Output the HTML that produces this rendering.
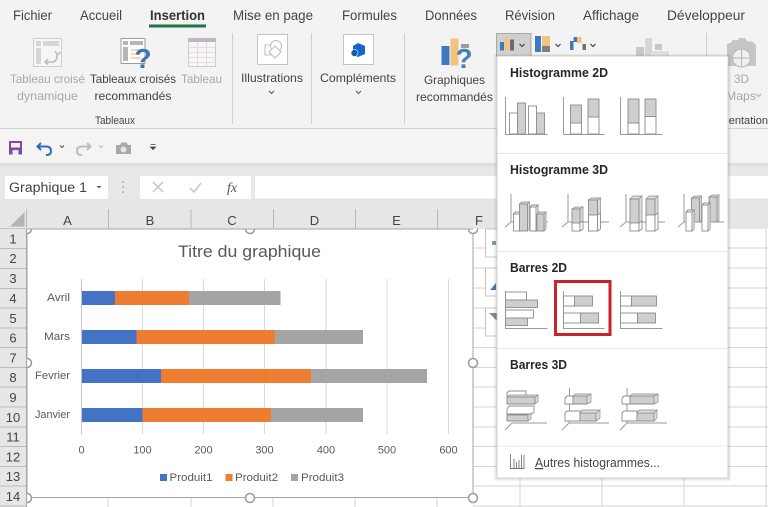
<!DOCTYPE html>
<html><head><meta charset="utf-8"><title>Excel</title>
<style>
html,body{margin:0;padding:0;background:#fff;width:768px;height:507px;overflow:hidden}
svg{display:block;filter:blur(.3px)}
text{font-family:"Liberation Sans",sans-serif}
.tab{font-size:13.5px;fill:#444}
.rb{font-size:12px;fill:#444;text-anchor:middle}
.dis{font-size:12px;fill:#a8a8a8;text-anchor:middle}
.hd{font-size:13px;fill:#444;text-anchor:middle}
.ax{font-size:11px;fill:#595959}
.sec{font-size:12.5px;font-weight:bold;fill:#262626}
.w{fill:#fff;stroke:#8c8c8c;stroke-width:.9}
.g{fill:#cfcfcf;stroke:#8c8c8c;stroke-width:.9}
.s{fill:#dcdcdc;stroke:#8c8c8c;stroke-width:.7}
.l{fill:none;stroke:#9a9a9a;stroke-width:1}
.h{fill:#fff;stroke:#9a9a9a;stroke-width:1.5}
</style></head><body>
<svg width="768" height="507" viewBox="0 0 768 507" xmlns="http://www.w3.org/2000/svg">
<!-- backgrounds -->
<rect width="768" height="507" fill="#fff"/>
<rect width="768" height="129" fill="#f3f3f3"/>
<rect y="128" width="768" height="1" fill="#d2d2d2"/>
<rect y="129" width="768" height="34" fill="#f4f4f3"/>
<rect y="163" width="768" height="46" fill="#e8e8e8"/>
<rect y="163" width="768" height="3" fill="#dedede"/>
<rect y="198" width="768" height="31" fill="#e6e6e6"/>
<!-- tabs -->
<text x="13" y="20" class="tab" textLength="39" lengthAdjust="spacingAndGlyphs">Fichier</text>
<text x="80" y="20" class="tab" textLength="42" lengthAdjust="spacingAndGlyphs">Accueil</text>
<text x="150" y="20" class="tab" style="font-weight:bold;fill:#333" textLength="55" lengthAdjust="spacingAndGlyphs">Insertion</text>
<text x="233" y="20" class="tab" textLength="80" lengthAdjust="spacingAndGlyphs">Mise en page</text>
<text x="342" y="20" class="tab" textLength="55" lengthAdjust="spacingAndGlyphs">Formules</text>
<text x="425" y="20" class="tab" textLength="52" lengthAdjust="spacingAndGlyphs">Données</text>
<text x="505" y="20" class="tab" textLength="50" lengthAdjust="spacingAndGlyphs">Révision</text>
<text x="583" y="20" class="tab" textLength="56" lengthAdjust="spacingAndGlyphs">Affichage</text>
<text x="667" y="20" class="tab" textLength="78" lengthAdjust="spacingAndGlyphs">Développeur</text>
<rect x="149" y="24.5" width="57" height="3" fill="#217346"/>
<!-- ribbon separators -->
<g fill="#d0d0d0"><rect x="232" y="33" width="1" height="91"/><rect x="311" y="33" width="1" height="91"/><rect x="404" y="33" width="1" height="91"/><rect x="706" y="33" width="1" height="91"/></g>
<!-- pivot icon -->
<rect x="33.5" y="38.5" width="28" height="28" fill="#f6f6f6" stroke="#cfcfcf"/>
<rect x="36" y="41" width="5" height="5" fill="#d6d6d6"/><rect x="43" y="41" width="16" height="5" fill="#d6d6d6"/><rect x="36" y="48" width="5" height="16" fill="#d6d6d6"/>
<path d="M45 62h7q5 0 5-7M55 51l2.500 4 3-3M48 59l-3 3 3 2.500" fill="none" stroke="#bdbdbd" stroke-width="1.600"/>
<!-- recommended pivot -->
<rect x="121" y="38.500" width="24" height="25" fill="#fff" stroke="#9b9b9b"/>
<rect x="123" y="41" width="5" height="4" fill="#b5b5b5"/><rect x="130" y="41" width="13" height="4" fill="#b5b5b5"/><rect x="123" y="47" width="5" height="14" fill="#b5b5b5"/>
<path d="M131 50h8M131 54h8M131 58h10" stroke="#eac49a" stroke-width="1.200"/>
<text x="143" y="68" style="font-size:28px;font-weight:bold;fill:#3f77ad" text-anchor="middle">?</text>
<!-- table icon -->
<rect x="188.500" y="38.500" width="27" height="28" fill="#f8f6f8" stroke="#d2c8d2"/>
<rect x="188" y="38" width="28" height="4" fill="#bdb8bd"/>
<path d="M188 47.500h28M188 52.500h28M188 57.500h28M188 62.500h28M197.500 42v24M206.500 42v24" stroke="#dcd4dc" stroke-width=".8"/>
<!-- ribbon labels -->
<text x="47.500" y="83" class="dis" textLength="75" lengthAdjust="spacingAndGlyphs">Tableau croisé</text>
<text x="47.500" y="100" class="dis" textLength="61" lengthAdjust="spacingAndGlyphs">dynamique</text>
<text x="133" y="83" class="rb" textLength="86" lengthAdjust="spacingAndGlyphs">Tableaux croisés</text>
<text x="133" y="100" class="rb" textLength="77" lengthAdjust="spacingAndGlyphs">recommandés</text>
<text x="201.500" y="83" class="dis" textLength="41" lengthAdjust="spacingAndGlyphs">Tableau</text>
<text x="115" y="124" class="rb" style="font-size:11px" textLength="40" lengthAdjust="spacingAndGlyphs">Tableaux</text>
<!-- illustrations -->
<rect x="257.500" y="34.500" width="30" height="30" fill="#fff" stroke="#c4c4c4"/>
<path d="M265 45h10v10h-10z" fill="none" stroke="#b4c0ca"/><circle cx="276" cy="46" r="5.500" fill="#fff" stroke="#b4c0ca"/><path d="M269 52l6-6 6 6-6 6z" fill="#fff" stroke="#b4c0ca"/>
<text x="272" y="82" class="rb" textLength="62" lengthAdjust="spacingAndGlyphs">Illustrations</text>
<path d="M269 91l2.500 2.500 2.500-2.500" fill="none" stroke="#555"/>
<!-- complements -->
<rect x="343.500" y="34.500" width="30" height="30" fill="#fff" stroke="#c4c4c4"/>
<path d="M358 43l7 3v8l-7 3-3-1.500v-3l-2-1v-5.500z" fill="#1168c8"/><circle cx="354.500" cy="53" r="3.500" fill="#0f5cb0" stroke="#fff" stroke-width=".6"/>
<text x="358" y="82" class="rb" textLength="76" lengthAdjust="spacingAndGlyphs">Compléments</text>
<path d="M356 91l2.500 2.500 2.500-2.500" fill="none" stroke="#555"/>
<!-- graphiques recommandés -->
<rect x="441.500" y="46" width="8" height="19" fill="#3f7bbc"/>
<rect x="450.500" y="38.500" width="8" height="27" fill="#f3c27f"/>
<rect x="461" y="44" width="8" height="4" fill="#9a9a9a"/>
<text x="464" y="68" style="font-size:28px;font-weight:bold;fill:#4a7eb5" text-anchor="middle">?</text>
<text x="454.500" y="84" class="rb" textLength="61" lengthAdjust="spacingAndGlyphs">Graphiques</text>
<text x="454.500" y="101" class="rb" textLength="77" lengthAdjust="spacingAndGlyphs">recommandés</text>
<!-- chart type selectors -->
<rect x="496.500" y="33.500" width="34.500" height="23" fill="#d0d0d0" stroke="#a8a8a8"/>
<rect x="500" y="42" width="4" height="8.500" fill="#3f7bbc"/><rect x="504.500" y="36.500" width="4.500" height="14" fill="#f3c27f"/><rect x="510" y="39.500" width="4" height="11" fill="#6a6a6a"/>
<path d="M519.500 44l2.500 2.500 2.500-2.500" fill="none" stroke="#444" stroke-width="1.200"/>
<rect x="535" y="36" width="6" height="16" fill="#3f7bbc"/><rect x="542" y="36" width="8" height="10" fill="#f3c27f"/><rect x="542" y="46" width="8" height="6" fill="#808080"/>
<path d="M555.500 44l2.500 2.500 2.500-2.500" fill="none" stroke="#444" stroke-width="1.200"/>
<rect x="570" y="41" width="3.500" height="9" fill="#3f7bbc"/><rect x="573.500" y="37" width="3.500" height="5" fill="#3f7bbc"/><rect x="577" y="37" width="4.500" height="6" fill="#f3c27f"/><rect x="582.500" y="44" width="3.500" height="6" fill="#707070"/>
<path d="M590.500 44l2.500 2.500 2.500-2.500" fill="none" stroke="#444" stroke-width="1.200"/>
<!-- grey disabled chart icon behind dropdown -->
<rect x="636" y="47" width="8" height="10" fill="#c8c8c8"/><rect x="645" y="38" width="7" height="19" fill="#d6d6d6"/><rect x="655" y="44" width="7" height="6" fill="#c8c8c8"/><rect x="650" y="52" width="18" height="5" fill="#e4e4e4" stroke="#c8c8c8" stroke-width=".8"/>
<!-- 3D maps etc (behind dropdown) -->
<path d="M727 66V44l5-2v-2h6l1-2h6l2 3 6 1 3 3v21z" fill="#c6c6c6"/>
<circle cx="741.500" cy="58" r="9" fill="#f0f0f0" stroke="#b5b5b5"/><path d="M732.500 58h18M741.500 49v18" stroke="#b5b5b5"/>
<text x="741.500" y="83" class="dis" textLength="15" lengthAdjust="spacingAndGlyphs">3D</text>
<text x="741" y="100" class="dis" textLength="30" lengthAdjust="spacingAndGlyphs">Maps</text>
<path d="M756 94l2.500 2.500 2.500-2.500" fill="none" stroke="#aaa"/>
<text x="768" y="124" class="rb" style="font-size:11px;text-anchor:end" textLength="62" lengthAdjust="spacingAndGlyphs">Présentation</text>
<!-- QAT -->
<path d="M9 141h13v13.500H9z" fill="#7a4aa6"/><rect x="11" y="143" width="9" height="4.500" fill="#f4eff8"/><rect x="12.500" y="150" width="6" height="4.500" fill="#efe8f4"/>
<path d="M41 143l-3.500 3.500 3.500 3.500M38 146.500h8q5 0 5 4.500t-5 4" fill="none" stroke="#2f6fb5" stroke-width="2"/>
<path d="M60 145.500l2 2 2-2" fill="none" stroke="#555" stroke-width="1.100"/>
<path d="M87 143l3.500 3.500-3.500 3.500M90 146.500h-8q-5 0-5 4.500t5 4" fill="none" stroke="#bdbdbd" stroke-width="2"/>
<path d="M99 145.500l2 2 2-2" fill="none" stroke="#bbb" stroke-width="1.100"/>
<path d="M116 145h4l1.500-2.500h5l1.500 2.500h3v9h-15z" fill="#a8a8a8"/><circle cx="123.500" cy="149.500" r="3" fill="#e4e4e4"/>
<path d="M150.500 144.500h5M150.500 147l2.500 2.500 2.500-2.500z" fill="#444" stroke="#444" stroke-width=".8"/>
<!-- name box + formula bar -->
<rect x="5" y="176" width="103" height="23" fill="#fff"/>
<text x="9" y="192" style="font-size:13.5px;fill:#444" textLength="78" lengthAdjust="spacingAndGlyphs">Graphique 1</text>
<path d="M96.500 186h5l-2.500 2.500z" fill="#666"/>
<g fill="#bcbcbc"><rect x="122" y="181" width="2" height="2"/><rect x="122" y="186" width="2" height="2"/><rect x="122" y="191" width="2" height="2"/></g>
<rect x="140" y="176" width="111" height="23" fill="#fff"/>
<path d="M153 182l10 10M163 182l-10 10" stroke="#c4c4c4" stroke-width="1.500"/>
<path d="M190 188l4 4 7-9" fill="none" stroke="#c4c4c4" stroke-width="1.500"/>
<text x="232" y="192" style="font-family:'Liberation Serif',serif;font-style:italic;font-size:14px;fill:#555" text-anchor="middle">fx</text>
<rect x="255" y="176" width="513" height="22.500" fill="#fff"/>
<!-- grid on the right -->
<g stroke="#d6d6d6" stroke-width="1">
<path d="M473 248h295M473 268h295M473 288h295M473 308h295M473 328h295M473 347.500h295M473 367.500h295M473 387h295M473 407h295M473 427h295M473 446.500h295M473 466.500h295M473 486h295M473 506h295"/>
<path d="M520 229v278M602 229v278M684 229v278M766 229v278"/>
<path d="M108 497v10M191 497v10M273 497v10M355 497v10M437 497v10"/>
</g>
<!-- chart side buttons -->
<rect x="485.500" y="229" width="15" height="28" fill="#fff" stroke="#c4c4c4"/><rect x="492" y="241" width="4" height="4" fill="#7aa39a"/>
<rect x="485.500" y="268" width="15" height="28" fill="#fff" stroke="#c4c4c4"/><path d="M490 290l6-7v7z" fill="#4a78ad"/>
<rect x="485.500" y="308" width="15" height="28" fill="#fff" stroke="#c4c4c4"/><path d="M489 313h9v9z" fill="#888"/>
<!-- chart -->
<rect x="27" y="229" width="446" height="268.500" fill="#fff" stroke="#a6a6a6" stroke-width="1"/>
<text x="249.500" y="257" style="font-size:17px;fill:#595959" text-anchor="middle" textLength="143" lengthAdjust="spacingAndGlyphs">Titre du graphique</text>
<g stroke="#d9d9d9" stroke-width="1"><path d="M142.500 279v155M203.500 279v155M264.500 279v155M326 279v155M387 279v155M448.500 279v155"/></g>
<path d="M81.500 279v155" stroke="#c4c4c4"/>
<g fill="#4472c4"><rect x="82" y="291" width="33" height="14"/><rect x="82" y="330" width="54.500" height="14"/><rect x="82" y="369" width="79" height="14"/><rect x="82" y="408" width="60.500" height="14"/></g>
<g fill="#ed7d31"><rect x="115" y="291" width="74" height="14"/><rect x="136.500" y="330" width="138.500" height="14"/><rect x="161" y="369" width="150" height="14"/><rect x="142.500" y="408" width="128.500" height="14"/></g>
<g fill="#a5a5a5"><rect x="189" y="291" width="91.500" height="14"/><rect x="275" y="330" width="88" height="14"/><rect x="311" y="369" width="116" height="14"/><rect x="271" y="408" width="92" height="14"/></g>
<text x="70" y="301" class="ax" text-anchor="end" textLength="23" lengthAdjust="spacingAndGlyphs">Avril</text>
<text x="70" y="340" class="ax" text-anchor="end" textLength="26" lengthAdjust="spacingAndGlyphs">Mars</text>
<text x="70" y="379" class="ax" text-anchor="end" textLength="35" lengthAdjust="spacingAndGlyphs">Fevrier</text>
<text x="70" y="418" class="ax" text-anchor="end" textLength="35" lengthAdjust="spacingAndGlyphs">Janvier</text>
<text x="81.500" y="453.500" class="ax" text-anchor="middle">0</text>
<text x="142.500" y="453.500" class="ax" text-anchor="middle">100</text>
<text x="203.500" y="453.500" class="ax" text-anchor="middle">200</text>
<text x="264.500" y="453.500" class="ax" text-anchor="middle">300</text>
<text x="326" y="453.500" class="ax" text-anchor="middle">400</text>
<text x="387" y="453.500" class="ax" text-anchor="middle">500</text>
<text x="448.500" y="453.500" class="ax" text-anchor="middle">600</text>
<rect x="160" y="474" width="7" height="7" fill="#4472c4"/><text x="169.500" y="481" class="ax" textLength="43" lengthAdjust="spacingAndGlyphs">Produit1</text>
<rect x="225.500" y="474" width="7" height="7" fill="#ed7d31"/><text x="235" y="481" class="ax" textLength="43" lengthAdjust="spacingAndGlyphs">Produit2</text>
<rect x="291" y="474" width="7" height="7" fill="#a5a5a5"/><text x="301" y="481" class="ax" textLength="43" lengthAdjust="spacingAndGlyphs">Produit3</text>
<!-- handles -->
<circle cx="27" cy="229" r="4.500" class="h"/><circle cx="250" cy="229" r="4.500" class="h"/><circle cx="473" cy="229" r="4.500" class="h"/>
<circle cx="27" cy="363" r="4.500" class="h"/><circle cx="473" cy="363" r="4.500" class="h"/>
<circle cx="27" cy="498" r="4.500" class="h"/><circle cx="250" cy="498" r="4.500" class="h"/><circle cx="473" cy="498" r="4.500" class="h"/>
<!-- column headers -->
<rect x="0" y="209" width="496" height="19.500" fill="#e6e6e6"/>
<rect x="0" y="228.500" width="473" height="1" fill="#a6a6a6"/>
<path d="M24.500 212v14.500h-14.500z" fill="#b4b4b4"/>
<g stroke="#b8b8b8"><path d="M26.500 209v19M108.500 209v19M191 209v19M273.500 209v19M355.500 209v19M437.500 209v19"/></g>
<text x="67.500" y="225" class="hd">A</text><text x="150" y="225" class="hd">B</text><text x="232" y="225" class="hd">C</text><text x="314.500" y="225" class="hd">D</text><text x="396.500" y="225" class="hd">E</text><text x="479" y="225" class="hd">F</text>
<!-- row headers -->
<rect x="0" y="229" width="26.500" height="278" fill="#e6e6e6"/>
<rect x="26" y="229" width="1" height="278" fill="#a6a6a6"/>
<g stroke="#bcbcbc"><path d="M0 248.500h26M0 268.500h26M0 288.500h26M0 308h26M0 328h26M0 347.500h26M0 367.500h26M0 387h26M0 407h26M0 427h26M0 446.500h26M0 466.500h26M0 486h26M0 506h26"/></g>
<g>
<text x="13" y="243.500" class="hd">1</text><text x="13" y="263" class="hd">2</text><text x="13" y="283" class="hd">3</text><text x="13" y="303" class="hd">4</text><text x="13" y="323" class="hd">5</text><text x="13" y="342.500" class="hd">6</text><text x="13" y="362.500" class="hd">7</text><text x="13" y="382" class="hd">8</text><text x="13" y="402" class="hd">9</text><text x="13" y="422" class="hd">10</text><text x="13" y="441.500" class="hd">11</text><text x="13" y="461.500" class="hd">12</text><text x="13" y="481" class="hd">13</text><text x="13" y="501" class="hd">14</text>
</g>
<!-- dropdown -->
<rect x="494" y="54" width="237" height="427" fill="#000" opacity=".05"/>
<rect x="495.500" y="55" width="234" height="424.500" fill="#000" opacity=".06"/>
<rect x="497" y="56" width="231" height="422" fill="#fff" stroke="#c8c8c8" stroke-width=".8"/>
<g fill="#e8e8e8"><rect x="497.500" y="153" width="230" height="1"/><rect x="497.500" y="251" width="230" height="1"/><rect x="497.500" y="348" width="230" height="1"/><rect x="497.500" y="445.500" width="230" height="1"/></g>
<text x="510" y="77" class="sec" textLength="98" lengthAdjust="spacingAndGlyphs">Histogramme 2D</text>
<text x="510" y="174" class="sec" textLength="98" lengthAdjust="spacingAndGlyphs">Histogramme 3D</text>
<text x="510" y="272" class="sec" textLength="57" lengthAdjust="spacingAndGlyphs">Barres 2D</text>
<text x="510" y="369" class="sec" textLength="57" lengthAdjust="spacingAndGlyphs">Barres 3D</text>
<!-- Histogramme 2D icons -->
<path class="l" d="M505.500 97v37.500h42"/>
<rect class="w" x="509.500" y="113" width="8" height="21"/><rect class="g" x="517.500" y="103" width="8" height="31"/><rect class="w" x="528.500" y="106" width="8" height="28"/><rect class="g" x="536.500" y="113" width="8" height="21"/>
<path class="l" d="M563.500 97v37.500h41"/>
<rect class="w" x="570.500" y="123" width="11" height="11"/><rect class="g" x="570.500" y="105" width="11" height="18"/><rect class="w" x="588" y="117" width="11" height="17"/><rect class="g" x="588" y="99" width="11" height="18"/>
<path class="l" d="M620.500 97v37.500h42"/>
<rect class="w" x="628" y="123" width="11" height="11"/><rect class="g" x="628" y="99" width="11" height="24"/><rect class="w" x="645" y="116.500" width="11" height="17.500"/><rect class="g" x="645" y="99" width="11" height="17.500"/>
<!-- Histogramme 3D icons -->
<path class="l" d="M505 227l6-5h37M511 222v-28"/>
<path class="w" d="M513.500 214l2-2h5v19h-1v-17z"/><rect class="w" x="513.500" y="214" width="6" height="17"/>
<path class="s" d="M519.500 204l2-2h8l-2 2zM527.500 204l2-2v27l-2 2z"/><rect class="g" x="519.500" y="204" width="8" height="27"/>
<path class="w" d="M530 207l2-2h6l-2 2zM536 207l2-2v24l-2 2z"/><rect class="w" x="530" y="207" width="6" height="24"/>
<path class="s" d="M537 214l2-2h7l-2 2zM544 214l2-2v17l-2 2z"/><rect class="g" x="537" y="214" width="7" height="17"/>
<path class="l" d="M562 227l6-5h41M568 222v-28"/>
<path class="s" d="M572 209l3-2h8l-3 2zM580 209l3-2v14l-3 2zM588.500 200l3-2h9l-3 2zM597.500 200l3-2v15l-3 2z"/>
<rect class="g" x="572" y="209" width="8" height="14"/><rect class="w" x="572" y="223" width="8" height="8"/><path class="w" d="M580 223l3-2v8l-3 2z"/>
<rect class="g" x="588.500" y="200" width="9" height="15"/><rect class="w" x="588.500" y="215" width="9" height="16"/><path class="w" d="M597.500 215l3-2v16l-3 2z"/>
<path class="l" d="M620 227l6-5h39M626 222v-28"/>
<path class="s" d="M630 199l3-3h9l-3 3zM639 199l3-3v25l-3 2zM646 199l3-3h9l-3 3zM655 199l3-3v17l-3 2z"/>
<rect class="g" x="630" y="199" width="9" height="24"/><rect class="w" x="630" y="223" width="9" height="8"/><path class="w" d="M639 223l3-2v8l-3 2z"/>
<rect class="g" x="646" y="199" width="9" height="16"/><rect class="w" x="646" y="215" width="9" height="16"/><path class="w" d="M655 215l3-2v16l-3 2z"/>
<path class="l" d="M678 227l6-5h40M684 222v-28"/>
<path class="s" d="M691.500 198l3-2h7l-2 2zM699.500 198l2-2v25h-2zM709 197l3-2h7l-2 2zM717 197l2-2v26h-2z"/>
<rect class="g" x="691.500" y="198" width="8" height="24"/><rect class="g" x="709" y="197" width="8" height="25"/>
<path class="w" d="M686 212l2-2h6l-2 2zM692 212l2-2v19l-2 2z"/><rect class="w" x="686" y="212" width="6" height="19"/>
<path class="w" d="M702 205l2-2h6l-2 2zM708 205l2-2v26l-2 2z"/><rect class="w" x="702" y="205" width="6" height="26"/>
<!-- Barres 2D icons -->
<path class="l" d="M505.500 291v37.500h42"/>
<rect class="w" x="505.500" y="292" width="21" height="8"/><rect class="g" x="505.500" y="300" width="32" height="7.500"/><rect class="w" x="505.500" y="310" width="28" height="8"/><rect class="g" x="505.500" y="318" width="22" height="7.500"/>
<path class="l" d="M563.500 291v37.500h41"/>
<rect class="w" x="563.500" y="296" width="11" height="10"/><rect class="g" x="574.500" y="296" width="18" height="10"/><rect class="w" x="563.500" y="313" width="17" height="10"/><rect class="g" x="580.500" y="313" width="18" height="10"/>
<path class="l" d="M620.500 291v37.500h42"/>
<rect class="w" x="620.500" y="296" width="11" height="10"/><rect class="g" x="631.500" y="296" width="25" height="10"/><rect class="w" x="620.500" y="313" width="17" height="10"/><rect class="g" x="637.500" y="313" width="18" height="10"/>
<rect x="555.500" y="281.500" width="54.500" height="53" fill="none" stroke="#c8222c" stroke-width="3"/>
<!-- Barres 3D icons -->
<path class="l" d="M505 430l7-7h35"/>
<path class="w" d="M507 393l2-2h17v6h-19z"/><path class="s" d="M507 397l2-2h29l-3 2zM535 397l3-2v7l-3 2z"/><path class="g" d="M507 397h28v7h-28z"/>
<path class="w" d="M507 409l2-3h25v6l-2 2h-25z"/><path class="g" d="M507 415h21v6h-21z"/><path class="s" d="M528 415l3-2v6l-3 2z"/>
<path class="l" d="M562 430l7-7h40M569.500 423v-35"/>
<path class="w" d="M565 398l2-2h6v8h-8z"/><path class="g" d="M573 396h14v8h-14z"/><path class="s" d="M573 396l2-2h16l-4 2zM587 396l4-2v8l-4 2z"/>
<path class="w" d="M565 413l2-2h13v10h-15z"/><path class="g" d="M580 413h16v8h-16z"/><path class="s" d="M580 413l2-3h18l-4 3zM596 413l4-3v8l-4 3z"/>
<path class="l" d="M620 430l7-7h40M627 423v-35"/>
<path class="w" d="M622 398l2-2h6v8h-8z"/><path class="g" d="M630 396h24v8h-24z"/><path class="s" d="M630 396l2-2h26l-4 2zM654 396l4-2v8l-4 2z"/>
<path class="w" d="M622 413l2-2h13v10h-15z"/><path class="g" d="M637 413h17v8h-17z"/><path class="s" d="M637 413l2-3h18l-3 3zM654 413l3-3v8l-3 3z"/>
<!-- Autres -->
<path d="M510.500 454v14.500h14M514 468v-9M516.500 468v-6M519 468v-8M521.500 468v-13M524 468v-13" fill="none" stroke="#777" stroke-width=".9"/>
<text x="535" y="467" style="font-size:12.500px;fill:#444" textLength="125" lengthAdjust="spacingAndGlyphs"><tspan text-decoration="underline">A</tspan>utres histogrammes...</text>
</svg>
</body></html>
